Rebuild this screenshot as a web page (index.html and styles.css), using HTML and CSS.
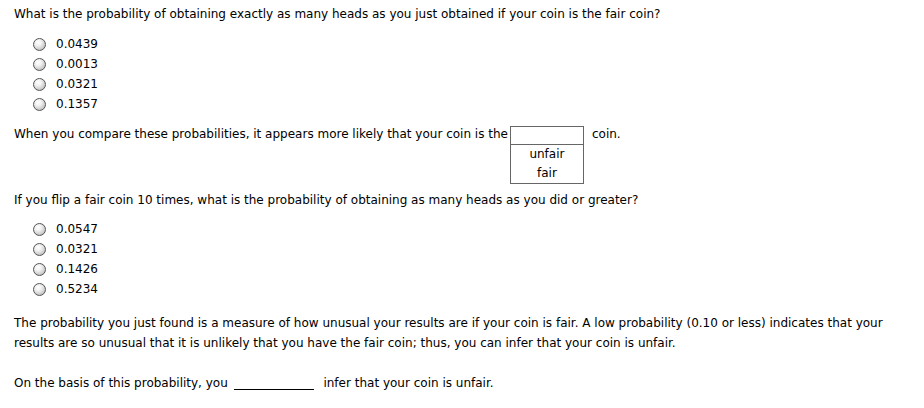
FILE: index.html
```html
<!DOCTYPE html>
<html>
<head>
<meta charset="utf-8">
<link rel="stylesheet" href="styles.css">
</head>
<body>
<div class="page">
  <p class="q first">What is the probability of obtaining exactly as many heads as you just obtained if your coin is the fair coin?</p>
  <ul class="opts">
    <li><span class="radio"></span><span>0.0439</span></li>
    <li><span class="radio"></span><span>0.0013</span></li>
    <li><span class="radio"></span><span>0.0321</span></li>
    <li><span class="radio"></span><span>0.1357</span></li>
  </ul>
  <div class="compare">
    <span class="lead">When you compare these probabilities, it appears more likely that your coin is the</span>
    <span class="select">
      <span class="sel-box"></span>
      <span class="sel-item">unfair</span>
      <span class="sel-item">fair</span>
    </span>
    <span class="trail">coin.</span>
  </div>
  <p class="q second">If you flip a fair coin 10 times, what is the probability of obtaining as many heads as you did or greater?</p>
  <ul class="opts">
    <li><span class="radio"></span><span>0.0547</span></li>
    <li><span class="radio"></span><span>0.0321</span></li>
    <li><span class="radio"></span><span>0.1426</span></li>
    <li><span class="radio"></span><span>0.5234</span></li>
  </ul>
  <p class="para">The probability you just found is a measure of how unusual your results are if your coin is fair. A low probability (0.10 or less) indicates that your results are so unusual that it is unlikely that you have the fair coin; thus, you can infer that your coin is unfair.</p>
  <p class="basis">On the basis of this probability, you <span class="blank"></span> infer that your coin is unfair.</p>
</div>
</body>
</html>
```
FILE: styles.css
```css
html, body { margin: 0; padding: 0; background: #fff; }
body {
  font-family: "DejaVu Sans", Verdana, sans-serif;
  font-size: 12px;
  color: #000;
}
.page { padding: 6px 14px 0 14px; }
p { margin: 0; }
.q { line-height: 16px; }
.opts { list-style: none; margin: 0; padding: 0 0 0 19px; }
.opts li { display: flex; align-items: center; height: 20px; }
.first + .opts { margin-top: 12px; }
.radio {
  width: 11px; height: 11px; border-radius: 50%;
  border: 1px solid #555;
  background: radial-gradient(circle at 38% 32%, #fff 0%, #f2f2f2 30%, #c4c4c4 75%, #8c8c8c 100%);
  margin-right: 10px; flex: none;
}
.compare { display: flex; align-items: flex-start; margin-top: 12px; }
.lead { padding-top: 1px; }
.select {
  display: flex; flex-direction: column; width: 72px;
  border: 1px solid #666; margin-left: 2px;
}
.sel-box { height: 17px; border-bottom: 1px solid #666; }
.sel-item { text-align: center; height: 19px; line-height: 19px; }
.trail { padding-top: 1px; margin-left: 8px; }
.second { margin-top: 8px; }
.second + .opts { margin-top: 11px; }
.para { line-height: 20px; margin-top: 14px; }
.basis { margin-top: 23px; }
.blank {
  display: inline-block; width: 80px; border-bottom: 1px solid #000;
  margin: 0 6px 0 2px; vertical-align: -3px;
}
```
